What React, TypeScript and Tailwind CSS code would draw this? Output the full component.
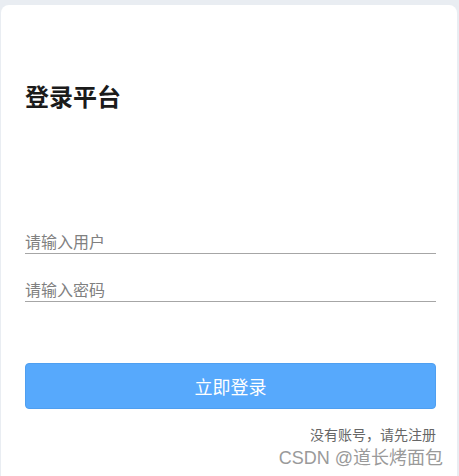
export default function App() {
  return (
    <div className="relative min-h-[476px] w-full overflow-hidden bg-[#e9edf2] pt-[5px] pl-px pr-[2px] font-['Microsoft_YaHei','Noto_Sans_CJK_SC',sans-serif]">
      <div className="min-h-[471px] rounded-t-lg bg-white pl-6 pr-[21px] pt-[75px] pb-8">
        {/* Title */}
        <h1 className="text-2xl leading-8 font-bold text-[#1b1b1b]">登录平台</h1>

        {/* Inputs */}
        <div className="mt-[116px] flex flex-col gap-[22px]">
          <input
            type="text"
            placeholder="请输入用户"
            className="h-[26px] w-full border-b border-[#a6a6a6] bg-transparent text-base text-[#333] outline-none placeholder:text-[#808080]"
          />
          <input
            type="password"
            placeholder="请输入密码"
            className="h-[26px] w-full border-b border-[#a6a6a6] bg-transparent text-base text-[#333] outline-none placeholder:text-[#808080]"
          />
        </div>

        {/* Submit */}
        <button className="mt-[61px] flex h-[46px] w-full items-center justify-center rounded border border-[#4f9ff0] bg-[#57a9fc] text-lg text-white">
          立即登录
        </button>

        <div className="mt-[15px] text-right text-sm leading-5 text-[#666]">
          没有账号，请先注册
        </div>
      </div>

      {/* Screenshot watermark */}
      <div className="absolute right-[16px] bottom-[6px] text-[18px] leading-6 text-[#9a9a9a] [text-shadow:0_0_2px_#fff]">
        <span className="font-['Liberation_Sans',sans-serif]">CSDN @</span>
        <span>道长烤面包</span>
      </div>
    </div>
  )
}
